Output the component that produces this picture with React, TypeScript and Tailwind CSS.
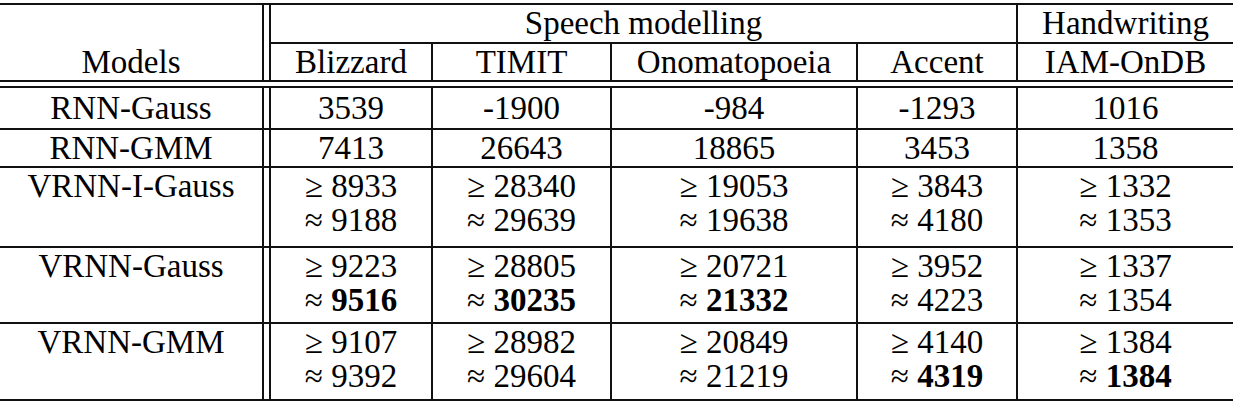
interface ModelRow {
  name: string;
  height: string;
  lines: { text: string; bold?: boolean }[][];
}

const colWidths = ['w-[162px]', 'w-[179px]', 'w-[246px]', 'w-[160px]', 'w-[215px]'];

const rows: ModelRow[] = [
  {
    name: 'RNN-Gauss',
    height: 'h-[42px]',
    lines: [[{ text: '3539' }], [{ text: '-1900' }], [{ text: '-984' }], [{ text: '-1293' }], [{ text: '1016' }]],
  },
  {
    name: 'RNN-GMM',
    height: 'h-[38px]',
    lines: [[{ text: '7413' }], [{ text: '26643' }], [{ text: '18865' }], [{ text: '3453' }], [{ text: '1358' }]],
  },
  {
    name: 'VRNN-I-Gauss',
    height: 'h-[80px]',
    lines: [
      [{ text: '≥ 8933' }, { text: '≈ 9188' }],
      [{ text: '≥ 28340' }, { text: '≈ 29639' }],
      [{ text: '≥ 19053' }, { text: '≈ 19638' }],
      [{ text: '≥ 3843' }, { text: '≈ 4180' }],
      [{ text: '≥ 1332' }, { text: '≈ 1353' }],
    ],
  },
  {
    name: 'VRNN-Gauss',
    height: 'h-[76px]',
    lines: [
      [{ text: '≥ 9223' }, { text: '9516', bold: true }],
      [{ text: '≥ 28805' }, { text: '30235', bold: true }],
      [{ text: '≥ 20721' }, { text: '21332', bold: true }],
      [{ text: '≥ 3952' }, { text: '≈ 4223' }],
      [{ text: '≥ 1337' }, { text: '≈ 1354' }],
    ],
  },
  {
    name: 'VRNN-GMM',
    height: 'h-[77px]',
    lines: [
      [{ text: '≥ 9107' }, { text: '≈ 9392' }],
      [{ text: '≥ 28982' }, { text: '≈ 29604' }],
      [{ text: '≥ 20849' }, { text: '≈ 21219' }],
      [{ text: '≥ 4140' }, { text: '4319', bold: true }],
      [{ text: '≥ 1384' }, { text: '1384', bold: true }],
    ],
  },
];

function Value({ text, bold }: { text: string; bold?: boolean }) {
  if (bold) {
    return (
      <div className="h-[34px] leading-[34px]">
        ≈ <span className="font-bold">{text}</span>
      </div>
    );
  }
  return <div className="h-[34px] leading-[34px]">{text}</div>;
}

export default function App() {
  return (
    <div className="min-h-[405px] w-[1235px] bg-white pt-[3px] text-black">
      <div className="w-[1233px] border-t-2 border-[#111] font-['Liberation_Serif'] text-[33px]">
        {/* header, first line */}
        <div className="flex h-[39px]">
          <div className="w-[264px] border-r-2 border-[#111]" />
          <div className="w-[7px] border-r-2 border-[#111]" />
          <div className="flex w-[747px] items-center justify-center border-r-2 border-b-2 border-[#111] leading-none">
            Speech modelling
          </div>
          <div className="flex w-[215px] items-center justify-center border-b-2 border-[#111] leading-none">
            Handwriting
          </div>
        </div>
        {/* header, second line */}
        <div className="flex h-[36px]">
          <div className="flex w-[264px] items-center justify-center border-r-2 border-[#111] leading-none">
            Models
          </div>
          <div className="w-[7px] border-r-2 border-[#111]" />
          {['Blizzard', 'TIMIT', 'Onomatopoeia', 'Accent', 'IAM-OnDB'].map((label, i) => (
            <div
              key={label}
              className={`flex items-center justify-center leading-none ${colWidths[i]} ${i < 4 ? 'border-r-2 border-[#111]' : ''}`}
            >
              {label}
            </div>
          ))}
        </div>
        {/* double rule */}
        <div className="h-[8px] border-y-2 border-[#111]" />
        {rows.map((row) => {
          const multi = row.lines[0].length > 1;
          const align = multi ? 'justify-start pt-px' : 'justify-center';
          return (
            <div key={row.name} className={`flex border-b-2 border-[#111] ${row.height}`}>
              <div className={`flex w-[264px] flex-col border-r-2 border-[#111] text-center ${align}`}>
                <Value text={row.name} />
              </div>
              <div className="w-[7px] border-r-2 border-[#111]" />
              {row.lines.map((cell, i) => (
                <div
                  key={i}
                  className={`flex flex-col text-center ${align} ${colWidths[i]} ${i < 4 ? 'border-r-2 border-[#111]' : ''}`}
                >
                  {cell.map((v, j) => (
                    <Value key={j} text={v.text} bold={v.bold} />
                  ))}
                </div>
              ))}
            </div>
          );
        })}
      </div>
    </div>
  );
}
